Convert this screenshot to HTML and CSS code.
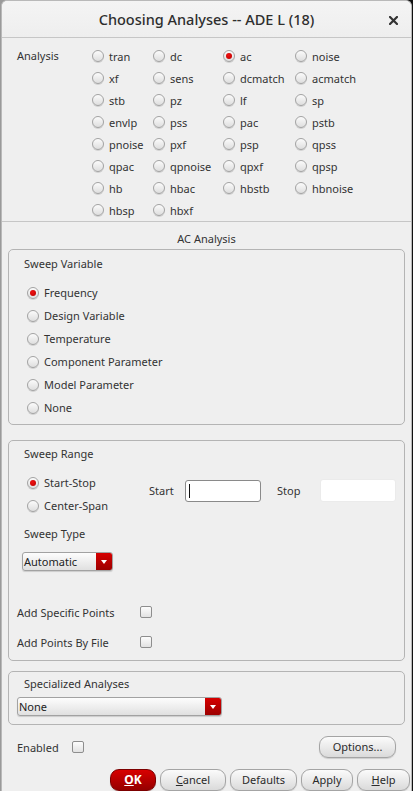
FILE: index.html
```html
<!DOCTYPE html>
<html lang="en">
<head>
<meta charset="UTF-8">
<title>Choosing Analyses -- ADE L (18)</title>
<link rel="stylesheet" href="styles.css">
</head>
<body>
<div class="dialog">
  <div class="titlebar">
    <span class="title">Choosing Analyses -- ADE L (18)</span>
    <span class="close">
      <svg width="9" height="9" viewBox="0 0 9 9"><path d="M1 1L8 8M8 1L1 8" stroke="#333" stroke-width="2.2" stroke-linecap="square"/></svg>
    </span>
  </div>

  <div class="analysis">
    <div class="analysis-label">Analysis</div>
    <div class="analysis-grid">
      <label class="radio"><span class="dot"></span>tran</label>
      <label class="radio"><span class="dot"></span>dc</label>
      <label class="radio"><span class="dot on"></span>ac</label>
      <label class="radio"><span class="dot"></span>noise</label>
      <label class="radio"><span class="dot"></span>xf</label>
      <label class="radio"><span class="dot"></span>sens</label>
      <label class="radio"><span class="dot"></span>dcmatch</label>
      <label class="radio"><span class="dot"></span>acmatch</label>
      <label class="radio"><span class="dot"></span>stb</label>
      <label class="radio"><span class="dot"></span>pz</label>
      <label class="radio"><span class="dot"></span>lf</label>
      <label class="radio"><span class="dot"></span>sp</label>
      <label class="radio"><span class="dot"></span>envlp</label>
      <label class="radio"><span class="dot"></span>pss</label>
      <label class="radio"><span class="dot"></span>pac</label>
      <label class="radio"><span class="dot"></span>pstb</label>
      <label class="radio"><span class="dot"></span>pnoise</label>
      <label class="radio"><span class="dot"></span>pxf</label>
      <label class="radio"><span class="dot"></span>psp</label>
      <label class="radio"><span class="dot"></span>qpss</label>
      <label class="radio"><span class="dot"></span>qpac</label>
      <label class="radio"><span class="dot"></span>qpnoise</label>
      <label class="radio"><span class="dot"></span>qpxf</label>
      <label class="radio"><span class="dot"></span>qpsp</label>
      <label class="radio"><span class="dot"></span>hb</label>
      <label class="radio"><span class="dot"></span>hbac</label>
      <label class="radio"><span class="dot"></span>hbstb</label>
      <label class="radio"><span class="dot"></span>hbnoise</label>
      <label class="radio"><span class="dot"></span>hbsp</label>
      <label class="radio"><span class="dot"></span>hbxf</label>
    </div>
  </div>

  <div class="section-title">AC Analysis</div>

  <div class="group sweep-var">
    <div class="group-title">Sweep Variable</div>
    <div class="radio-list">
      <label class="radio"><span class="dot on"></span>Frequency</label>
      <label class="radio"><span class="dot"></span>Design Variable</label>
      <label class="radio"><span class="dot"></span>Temperature</label>
      <label class="radio"><span class="dot"></span>Component Parameter</label>
      <label class="radio"><span class="dot"></span>Model Parameter</label>
      <label class="radio"><span class="dot"></span>None</label>
    </div>
  </div>

  <div class="group sweep-range">
    <div class="group-title">Sweep Range</div>
    <div class="range-row">
      <div class="radio-list range-modes">
        <label class="radio"><span class="dot on"></span>Start-Stop</label>
        <label class="radio"><span class="dot"></span>Center-Span</label>
      </div>
      <div class="range-fields">
        <span class="field-label start-label">Start</span>
        <span class="text-field focused"><span class="caret"></span></span>
        <span class="field-label stop-label">Stop</span>
        <span class="text-field plain"></span>
      </div>
    </div>
    <div class="group-title sweep-type">Sweep Type</div>
    <div class="combo type-combo"><span class="combo-text">Automatic</span><span class="combo-arrow"></span></div>
    <div class="check-row first"><span class="check-label">Add Specific Points</span><span class="checkbox"></span></div>
    <div class="check-row"><span class="check-label">Add Points By File</span><span class="checkbox"></span></div>
  </div>

  <div class="group specialized">
    <div class="group-title">Specialized Analyses</div>
    <div class="combo special-combo"><span class="combo-text">None</span><span class="combo-arrow"></span></div>
  </div>

  <div class="footer-row">
    <div class="enabled"><span class="enabled-label">Enabled</span><span class="checkbox"></span></div>
    <button class="btn options-btn">Options...</button>
  </div>

  <div class="button-bar">
    <button class="btn btn-ok"><u>O</u>K</button>
    <button class="btn btn-cancel"><u>C</u>ancel</button>
    <button class="btn btn-defaults">Defaults</button>
    <button class="btn btn-apply">Apply</button>
    <button class="btn btn-help"><u>H</u>elp</button>
  </div>
</div>
</body>
</html>
```

FILE: styles.css
```css
* { box-sizing: border-box; }
body {
    margin: 0; height: 791px; overflow: hidden;
    background: linear-gradient(90deg, #9a9a9a 50%, #111 50%);
    font-family: "Noto Sans", "DejaVu Sans", sans-serif; font-size: 11px; color: #333;
}
.dialog {
    margin-left: 1px; width: 411px; height: 791px; overflow: hidden;
    background: #efefef; border: 1px solid #b9b9b9; border-bottom: none; border-radius: 6px 6px 0 0;
}

/* title bar */
.titlebar {
    position: relative; height: 37px; border-bottom: 1px solid #c6c6c6;
    display: flex; align-items: center; justify-content: center;
    background: linear-gradient(#f4f4f4, #eeeeee); border-radius: 5px 5px 0 0;
}
.title { font-size: 14.5px; font-weight: 500; color: #2e2e2e; }
.close { position: absolute; right: 13px; top: 15px; display: flex; }

/* analysis picker */
.analysis { display: flex; padding: 7px 0 0 15px; border-bottom: 1px solid #c6c6c6; height: 184px; }
.analysis-label { width: 75px; line-height: 22px; }
.analysis-grid { display: grid; grid-template-columns: 61px 70px 72px auto; grid-auto-rows: 22px; }

.radio { display: flex; align-items: center; gap: 5px; white-space: nowrap; }
.dot {
    position: relative; flex: none; width: 12px; height: 12px; border-radius: 50%;
    border: 1px solid #a3a3a3; background: linear-gradient(#fbfbfb, #dedede);
    box-shadow: 0 1px 0 rgba(0, 0, 0, 0.12);
}
.dot.on::after {
    content: ""; position: absolute; left: 2px; top: 2px; width: 6px; height: 6px; border-radius: 50%;
    background: radial-gradient(circle at 40% 35%, #f01010, #b80000);
}

.section-title { text-align: center; padding-top: 10px; line-height: 14px; }

/* framed groups */
.group { margin: 3px 6px 0; border: 1px solid #b4b4b4; border-radius: 5px; }
.group-title { padding: 7px 0 0 15px; line-height: 14px; }
.radio-list { display: flex; flex-direction: column; padding-left: 18px; }
.radio-list .radio { height: 23px; }

.sweep-var { padding-bottom: 5px; }
.sweep-var .radio-list { margin-top: 10px; }

.sweep-range { margin-top: 15px; padding-bottom: 8px; }
.sweep-range .group-title:first-child { padding-top: 6px; }
.range-row { display: flex; margin-top: 10px; }
.range-modes { width: 140px; }
.range-fields { display: flex; align-items: center; height: 23px; margin-top: 8px; }
.start-label { width: 36px; }
.stop-label { width: 43px; margin-left: 16px; }
.text-field { width: 76px; height: 22px; background: #fff; border-radius: 3px; display: flex; align-items: center; padding-left: 3px; }
.text-field.focused { border: 1px solid #8a8a8a; }
.text-field.plain { border: 1px solid #ebebeb; height: 23px; }
.caret { width: 1px; height: 14px; background: #111; }
.sweep-type { padding-top: 10px; }

.combo {
    display: flex; height: 19px; border: 1px solid #a2a2a2; border-radius: 3px; overflow: hidden;
    background: linear-gradient(#fdfdfd, #e0e0e0); box-shadow: 0 1px 1px rgba(0, 0, 0, 0.15);
}
.combo-text { flex: 1; padding-left: 1px; line-height: 17px; font-size: 11px; color: #222; }
.combo-arrow { position: relative; width: 16px; background: linear-gradient(#d60000, #9c0000); }
.combo-arrow::after {
    content: ""; position: absolute; left: 5px; top: 7px;
    border-left: 3px solid transparent; border-right: 3px solid transparent; border-top: 4px solid #fff;
}
.type-combo { width: 91px; margin: 11px 0 0 13px; }

.check-row { display: flex; align-items: center; height: 20px; margin-top: 10px; padding-left: 8px; }
.check-row.first { margin-top: 31px; }
.check-label { width: 123px; }
.checkbox {
    width: 12px; height: 12px; border: 1px solid #8e8e8e; border-radius: 2px;
    background: linear-gradient(#fdfdfd, #e2e2e2);
}

.specialized { margin-top: 10px; padding-bottom: 8px; }
.specialized .group-title { padding-top: 5px; }
.special-combo { width: 205px; margin: 6px 0 0 8px; }

/* bottom controls */
.footer-row { display: flex; align-items: center; justify-content: space-between; height: 22px; margin-top: 11px; padding: 0 15px 0 15px; }
.enabled { display: flex; align-items: center; }
.enabled-label { width: 55px; }

.btn {
    height: 22px; border: 1px solid #a4a4a4; border-radius: 9px; padding: 0;
    background: linear-gradient(#fbfbfb, #dadada); box-shadow: 0 1px 1px rgba(0, 0, 0, 0.15);
    font-family: inherit; font-size: 11px; line-height: 18px; color: #2a2a2a;
}
.options-btn { width: 77px; }
.button-bar { display: flex; justify-content: flex-end; gap: 4px; margin-top: 11px; padding-right: 1px; }
.btn-ok {
    width: 46px; border-color: #7c0000; color: #fff; font-weight: bold; font-size: 12px;
    background: linear-gradient(#d80000, #950000);
}
.btn-cancel { width: 66px; }
.btn-defaults { width: 67px; }
.btn-apply { width: 52px; }
.btn-help { width: 53px; }
```
